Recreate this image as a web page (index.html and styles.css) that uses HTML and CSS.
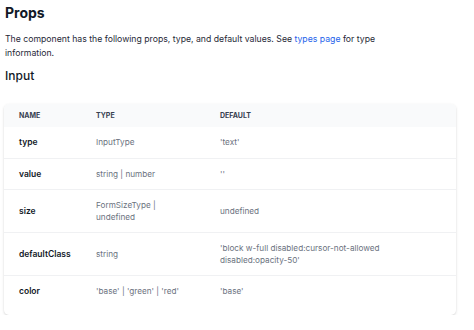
FILE: index.html
```html
<!DOCTYPE html>
<html lang="en">
<head>
  <meta charset="UTF-8" />
  <title>Props</title>
  <link rel="stylesheet" href="styles.css">
</head>
<body>
  <section class="props">
    <h2 class="props-title">Props</h2>
    <p class="props-text">The component has the following props, type, and default values. See <a href="#" class="link">types page</a> for type information.</p>
    <h3 class="props-sub">Input</h3>

    <div class="table-card">
      <table class="props-table">
        <thead>
          <tr>
            <th class="col-name">Name</th>
            <th class="col-type">Type</th>
            <th class="col-default">Default</th>
          </tr>
        </thead>
        <tbody>
          <tr>
            <td class="prop">type</td>
            <td>InputType</td>
            <td>'text'</td>
          </tr>
          <tr>
            <td class="prop">value</td>
            <td>string | number</td>
            <td>''</td>
          </tr>
          <tr>
            <td class="prop">size</td>
            <td>FormSizeType | undefined</td>
            <td>undefined</td>
          </tr>
          <tr>
            <td class="prop">defaultClass</td>
            <td>string</td>
            <td>'block w-full disabled:cursor-not-allowed disabled:opacity-50'</td>
          </tr>
          <tr>
            <td class="prop">color</td>
            <td>'base' | 'green' | 'red'</td>
            <td>'base'</td>
          </tr>
        </tbody>
      </table>
    </div>
  </section>
</body>
</html>
```

FILE: styles.css
```css
* {
  margin: 0;
  padding: 0;
  box-sizing: border-box;
}

body {
  font-family: 'Inter', sans-serif;
  background: #ffffff;
  color: #111827;
}

.props {
  padding: 4px 18px 0 5px;
}

.props-title {
  font-size: 14px;
  font-weight: 700;
  line-height: 18px;
  margin-bottom: 10px;
}

.props-text {
  max-width: 420px;
  font-size: 8.7px;
  line-height: 14px;
  color: #1f2937;
  margin-bottom: 8px;
}

.link {
  color: #2563eb;
  text-decoration: none;
}

.props-sub {
  font-size: 12px;
  font-weight: 500;
  line-height: 16px;
  margin-bottom: 20px;
}

/* Table */
.table-card {
  margin-left: -1px;
  border-radius: 5px;
  box-shadow: 0 1px 3px rgba(0, 0, 0, 0.12), 0 1px 2px rgba(0, 0, 0, 0.06);
  padding-bottom: 9px;
  overflow: hidden;
}

.props-table {
  width: 100%;
  table-layout: fixed;
  border-collapse: collapse;
  font-size: 8.2px;
  line-height: 12px;
}

.props-table th {
  background: #f9fafb;
  text-align: left;
  text-transform: uppercase;
  font-size: 7px;
  font-weight: 700;
  color: #374151;
  padding: 6px 15px 5px;
  height: 23px;
}

.props-table td {
  padding: 9px 15px;
  color: #6b7280;
  vertical-align: middle;
  border-top: 1px solid #f0f1f3;
  height: 31px;
}

.props-table tbody tr:first-child td {
  border-top: none;
}

.props-table td.prop {
  color: #111827;
  font-size: 8.5px;
  font-weight: 600;
}

.col-name {
  width: 77px;
}

.col-type {
  width: 124px;
}
```
